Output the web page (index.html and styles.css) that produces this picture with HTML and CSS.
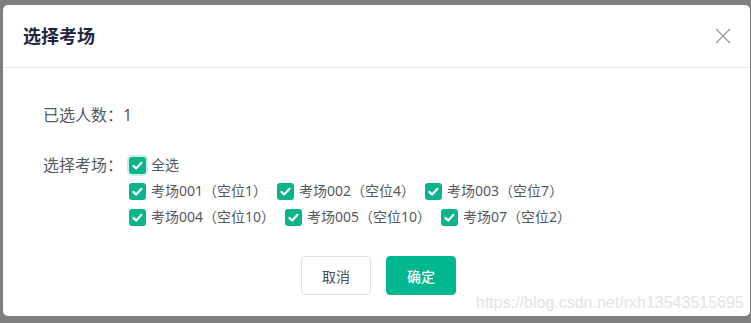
FILE: index.html
```html
<!DOCTYPE html>
<html lang="zh-CN">
<head>
<meta charset="utf-8">
<title>选择考场</title>
<link rel="stylesheet" href="styles.css">
</head>
<body>
<div class="dialog">
  <div class="dialog-header">
    <span class="dialog-title">选择考场</span>
    <span class="close" aria-label="close">
      <svg width="16" height="16" viewBox="0 0 16 16"><path d="M1 1 L15 15 M15 1 L1 15" stroke="#9a9a9a" stroke-width="1.3" fill="none"/></svg>
    </span>
  </div>
  <div class="dialog-body">
    <div class="info">已选人数：1</div>
    <div class="field">
      <div class="field-label">选择考场：</div>
      <div class="options">
        <div class="row">
          <label class="cb focus"><span class="box"><svg viewBox="0 0 18 18"><path d="M4.6 9.4 L7.6 12.2 L13.2 6.2" stroke="#fff" stroke-width="2.3" fill="none" stroke-linecap="round" stroke-linejoin="round"/></svg></span><span class="txt">全选</span></label>
        </div>
        <div class="row">
          <label class="cb"><span class="box"><svg viewBox="0 0 18 18"><path d="M4.6 9.4 L7.6 12.2 L13.2 6.2" stroke="#fff" stroke-width="2.3" fill="none" stroke-linecap="round" stroke-linejoin="round"/></svg></span><span class="txt">考场001（空位1）</span></label>
          <label class="cb"><span class="box"><svg viewBox="0 0 18 18"><path d="M4.6 9.4 L7.6 12.2 L13.2 6.2" stroke="#fff" stroke-width="2.3" fill="none" stroke-linecap="round" stroke-linejoin="round"/></svg></span><span class="txt">考场002（空位4）</span></label>
          <label class="cb"><span class="box"><svg viewBox="0 0 18 18"><path d="M4.6 9.4 L7.6 12.2 L13.2 6.2" stroke="#fff" stroke-width="2.3" fill="none" stroke-linecap="round" stroke-linejoin="round"/></svg></span><span class="txt">考场003（空位7）</span></label>
        </div>
        <div class="row">
          <label class="cb"><span class="box"><svg viewBox="0 0 18 18"><path d="M4.6 9.4 L7.6 12.2 L13.2 6.2" stroke="#fff" stroke-width="2.3" fill="none" stroke-linecap="round" stroke-linejoin="round"/></svg></span><span class="txt">考场004（空位10）</span></label>
          <label class="cb"><span class="box"><svg viewBox="0 0 18 18"><path d="M4.6 9.4 L7.6 12.2 L13.2 6.2" stroke="#fff" stroke-width="2.3" fill="none" stroke-linecap="round" stroke-linejoin="round"/></svg></span><span class="txt">考场005（空位10）</span></label>
          <label class="cb"><span class="box"><svg viewBox="0 0 18 18"><path d="M4.6 9.4 L7.6 12.2 L13.2 6.2" stroke="#fff" stroke-width="2.3" fill="none" stroke-linecap="round" stroke-linejoin="round"/></svg></span><span class="txt">考场07（空位2）</span></label>
        </div>
      </div>
    </div>
  </div>
  <div class="dialog-footer">
    <button class="btn btn-default">取消</button>
    <button class="btn btn-primary">确定</button>
  </div>
  <div class="watermark">https://blog.csdn.net/rxh13543515695</div>
</div>
</body>
</html>
```

FILE: styles.css
```css
* { box-sizing: border-box; }

html, body {
  margin: 0;
  padding: 0;
  height: 323px;
  overflow: hidden;
  background: #7f7f7f;
  font-family: "Noto Sans", "Noto Sans CJK SC", sans-serif;
}

.dialog {
  position: relative;
  margin: 5px 0 0 3px;
  width: 747px;
  height: 311px;
  background: #fff;
  border-radius: 5px;
  display: flex;
  flex-direction: column;
}

.dialog-header {
  height: 63px;
  border-bottom: 1px solid #e8e8e8;
  display: flex;
  align-items: center;
  justify-content: space-between;
  padding: 0 19px 0 20px;
}

.dialog-title {
  font-size: 18px;
  font-weight: 700;
  color: #1f2540;
  line-height: 24px;
  margin-top: -1px;
}

.close {
  width: 16px;
  height: 16px;
  display: flex;
}

.dialog-body {
  padding: 35px 40px 0 40px;
  color: #55585e;
}

.info {
  font-size: 16px;
  line-height: 24px;
}

.field {
  display: flex;
  margin-top: 25px;
}

.field-label {
  font-size: 16px;
  line-height: 26px;
  width: 86px;
}

.options {
  display: flex;
  flex-direction: column;
}

.row {
  display: flex;
  height: 26px;
  align-items: center;
}

.cb {
  display: inline-flex;
  align-items: center;
  margin-right: 10px;
  font-size: 14px;
  color: #55585e;
}

.box {
  width: 17px;
  height: 17px;
  border-radius: 3px;
  background: #0bb48b;
  display: inline-flex;
  margin-right: 5px;
}

.box svg {
  width: 17px;
  height: 17px;
}

.cb.focus .box {
  box-shadow: 0 0 0 2px rgba(11, 180, 139, 0.22);
}

.txt {
  line-height: 20px;
}

.dialog-footer {
  display: flex;
  justify-content: center;
  gap: 15px;
  margin-top: 26px;
  padding-left: 4px;
}

.btn {
  width: 70px;
  height: 39px;
  border-radius: 4px;
  font-size: 14px;
  font-family: "Noto Sans CJK SC", sans-serif;
  cursor: pointer;
}

.btn-default {
  background: #fff;
  border: 1px solid #dcdfe6;
  color: #4a4d5a;
}

.btn-primary {
  background: #00b78f;
  border: 1px solid #00b78f;
  color: #fff;
  font-weight: 500;
}

.watermark {
  position: absolute;
  left: 473px;
  top: 288px;
  font-family: "Liberation Sans", Arial, sans-serif;
  font-size: 16px;
  line-height: 20px;
  color: #e3e3e3;
  white-space: nowrap;
}
```
